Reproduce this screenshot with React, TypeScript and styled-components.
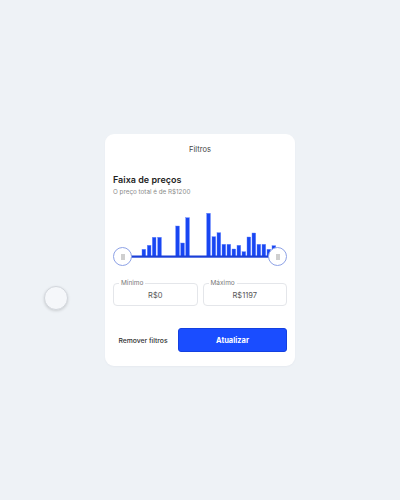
import React from "react";
import styled, { createGlobalStyle } from "styled-components";

const GlobalStyle = createGlobalStyle`
  html, body {
    margin: 0;
    padding: 0;
    background: #eef2f6;
    font-family: Inter, "Open Sans", sans-serif;
  }
`;

const Page = styled.div`
  position: relative;
  width: 400px;
  height: 500px;
  display: flex;
  align-items: center;
  justify-content: center;
`;

const FloatingDot = styled.div`
  position: absolute;
  left: 44px;
  top: 286px;
  width: 22px;
  height: 22px;
  border-radius: 50%;
  background: #f5f7fa;
  border: 1px solid #d3d7dd;
  box-shadow: 0 1px 3px rgba(0, 0, 0, 0.15);
`;

const Card = styled.div`
  width: 190px;
  height: 232px;
  box-sizing: border-box;
  background: #ffffff;
  border-radius: 9px;
  padding: 10px 8px 14px;
  display: flex;
  flex-direction: column;
  box-shadow: 0 1px 2px rgba(40, 60, 90, 0.04);
`;

const Header = styled.div`
  text-align: center;
  font-size: 7.5px;
  line-height: 12px;
  color: #444444;
`;

const Title = styled.div`
  margin-top: 18px;
  font-size: 9px;
  font-weight: 600;
  line-height: 12px;
  color: #1e1e1e;
`;

const Subtitle = styled.div`
  margin-top: 1px;
  font-size: 6.3px;
  line-height: 10px;
  color: #8a8a8a;
`;

const Slider = styled.div`
  position: relative;
  margin-top: 13px;
  height: 58px;
`;

const Chart = styled.svg`
  display: block;
  width: 174px;
  height: 58px;
`;

const Knob = styled.div<{ $side: "left" | "right" }>`
  position: absolute;
  top: 37px;
  ${(p) => (p.$side === "left" ? "left: 0;" : "right: 0;")}
  width: 19px;
  height: 19px;
  box-sizing: border-box;
  border-radius: 50%;
  background: #ffffff;
  border: 1px solid #8ea2e6;
  display: flex;
  align-items: center;
  justify-content: center;
  &::after {
    content: "";
    width: 4px;
    height: 6px;
    background: #cfcfcf;
  }
`;

const Inputs = styled.div`
  margin-top: 11px;
  display: flex;
  gap: 5px;
`;

const Field = styled.fieldset`
  flex: 1;
  margin: 0;
  padding: 0 0 1px;
  border: 1px solid #e4e6ea;
  border-radius: 4px;
  min-width: 0;
`;

const Legend = styled.legend`
  margin-left: 5px;
  padding: 0 2px;
  font-size: 6.5px;
  line-height: 8px;
  color: #7a7a7a;
`;

const Value = styled.div`
  text-align: center;
  font-size: 7.5px;
  line-height: 17px;
  color: #555555;
`;

const Actions = styled.div`
  margin-top: auto;
  display: flex;
  align-items: center;
  gap: 5px;
`;

const TextButton = styled.button`
  width: 60px;
  padding: 0;
  border: none;
  background: transparent;
  font-family: inherit;
  font-size: 6.8px;
  font-weight: 500;
  color: #333333;
  white-space: nowrap;
`;

const PrimaryButton = styled.button`
  flex: 1;
  height: 24px;
  border: 1px solid #1440e0;
  border-radius: 3px;
  background: #1a4dff;
  color: #ffffff;
  font-family: inherit;
  font-size: 7.5px;
  font-weight: 700;
`;

// bar x start / top in card-content coordinates
const bars: [number, number][] = [
  [29, 39.3], [34.3, 35.3], [39.3, 27.3], [44.7, 27.3],
  [62.7, 16], [67.7, 33], [72.7, 7.7],
  [93.7, 3.3], [99, 26.7], [104, 22.7], [109, 34.3], [114, 34.3],
  [119, 39], [124, 35.3], [129, 41.7], [134, 27], [139, 23],
  [144, 34.3], [149, 34.3], [154, 39.3], [159, 35.7],
];

const BASE = 46.5;

export default function App() {
  return (
    <Page>
      <GlobalStyle />
      <FloatingDot />
      <Card>
        <Header>Filtros</Header>
        <Title>Faixa de preços</Title>
        <Subtitle>O preço total é de R$1200</Subtitle>
        <Slider>
          <Chart viewBox="0 0 174 58">
            {bars.map(([x, top], i) => (
              <rect
                key={i}
                x={x}
                y={top}
                width={3.7}
                height={BASE - top}
                fill="#1846f2"
                stroke="#5f80ff"
                strokeWidth={0.4}
              />
            ))}
            <rect x={9} y={BASE - 1} width={156} height={2.2} fill="#1a3fd8" />
          </Chart>
          <Knob $side="left" />
          <Knob $side="right" />
        </Slider>
        <Inputs>
          <Field>
            <Legend>Mínimo</Legend>
            <Value>R$0</Value>
          </Field>
          <Field>
            <Legend>Máximo</Legend>
            <Value>R$1197</Value>
          </Field>
        </Inputs>
        <Actions>
          <TextButton>Remover filtros</TextButton>
          <PrimaryButton>Atualizar</PrimaryButton>
        </Actions>
      </Card>
    </Page>
  );
}
